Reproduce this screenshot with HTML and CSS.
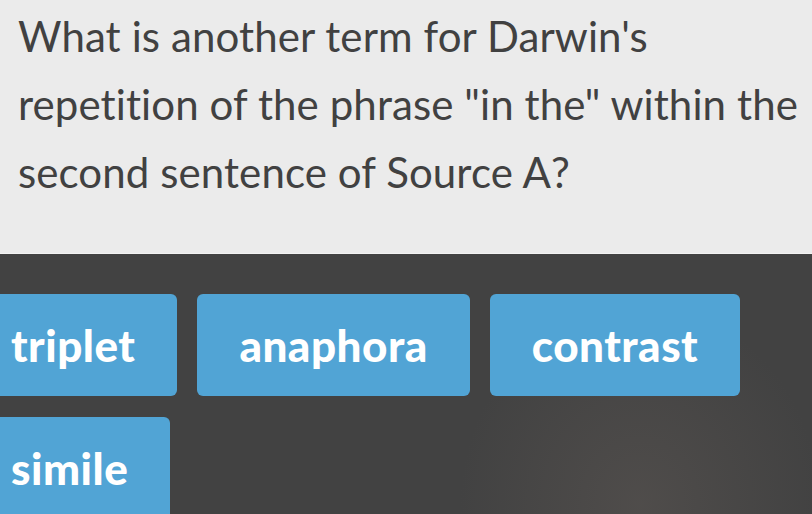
FILE: index.html
```html
<!DOCTYPE html>
<html lang="en">
<head>
<meta charset="utf-8">
<title>Question</title>
<link rel="stylesheet" href="styles.css">
</head>
<body>
<main class="quiz">
  <section class="question">
    <p class="question-text">What is another term for Darwin's<br>repetition of the phrase "in the" within the<br>second sentence of Source A?</p>
  </section>
  <section class="answers">
    <div class="answer-grid">
      <button class="answer">triplet</button>
      <button class="answer">anaphora</button>
      <button class="answer">contrast</button>
      <button class="answer">simile</button>
    </div>
  </section>
</main>
</body>
</html>
```
FILE: styles.css
```css
html, body {
  margin: 0;
  padding: 0;
  width: 812px;
  height: 514px;
  overflow: hidden;
}

body {
  font-family: "Lato", "Open Sans", sans-serif;
  background: #424242;
}

.quiz {
  display: flex;
  flex-direction: column;
  height: 514px;
}

.question {
  background: #ebebeb;
  height: 254px;
  border-bottom: 1px solid #f3f3f3;
  box-sizing: border-box;
  padding: 2px 0 0 18px;
}

.question-text {
  margin: 0;
  font-size: 42px;
  line-height: 68px;
  color: #414141;
  font-weight: 400;
  letter-spacing: 0.1px;
}

.answers {
  flex: 1;
  background:
    radial-gradient(ellipse 180px 200px at 640px 250px, rgba(90, 85, 82, 0.55), rgba(66, 66, 66, 0) 100%),
    #424242;
  padding-top: 40px;
  overflow: hidden;
}

.answer-grid {
  display: flex;
  flex-wrap: wrap;
  gap: 21px 20px;
  margin-left: -31px;
  width: 800px;
}

.answer {
  font-family: "Lato", "Open Sans", sans-serif;
  font-weight: 900;
  font-size: 44px;
  letter-spacing: 0.5px;
  color: #ffffff;
  background: #51a4d5;
  border: none;
  border-radius: 6px;
  height: 102px;
  padding: 0 42px;
  cursor: pointer;
}
```
